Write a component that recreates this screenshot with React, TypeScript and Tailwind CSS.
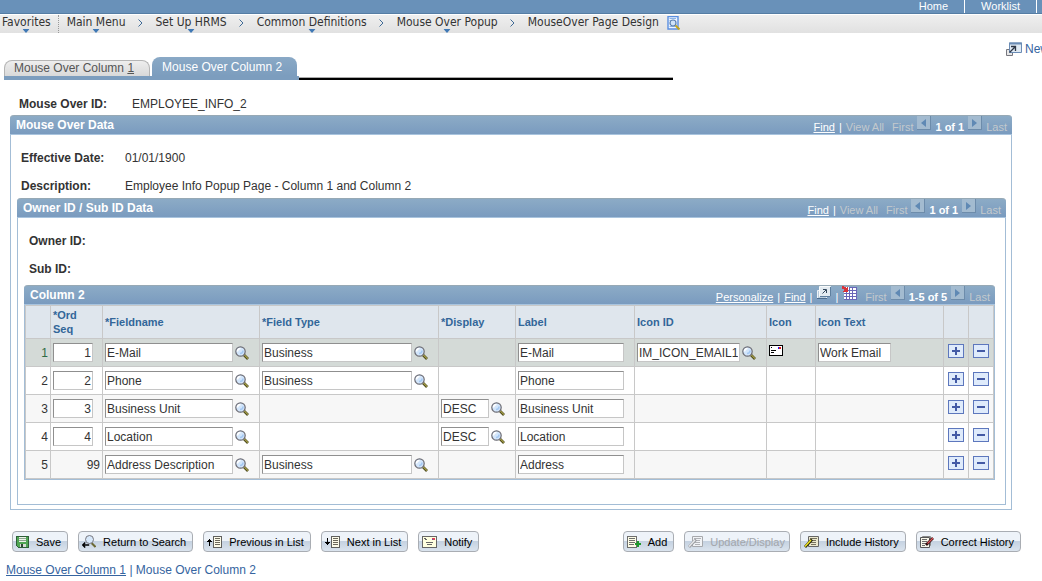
import type { ReactNode } from "react";
import clsx from "clsx";

type Row = {
  seq: string;
  seqEditable?: boolean;
  field: string;
  type?: string;
  display?: string;
  label: string;
  iconId?: string;
  iconText?: string;
};

const CRUMBS = ["Main Menu", "Set Up HRMS", "Common Definitions", "Mouse Over Popup"];

const ROWS: Row[] = [
  { seq: "1", seqEditable: true, field: "E-Mail", type: "Business", label: "E-Mail", iconId: "IM_ICON_EMAIL1", iconText: "Work Email" },
  { seq: "2", seqEditable: true, field: "Phone", type: "Business", label: "Phone" },
  { seq: "3", seqEditable: true, field: "Business Unit", display: "DESC", label: "Business Unit" },
  { seq: "4", seqEditable: true, field: "Location", display: "DESC", label: "Location" },
  { seq: "99", field: "Address Description", type: "Business", label: "Address" },
];

/* ---------- icons ---------- */

function Magnifier() {
  return (
    <svg width="14" height="14" viewBox="0 0 14 14">
      <path d="M9 9l4 4" stroke="#4c4a1c" strokeWidth="2.6" />
      <path d="M9 8.6l4 4" stroke="#b0a94e" strokeWidth="1.1" />
      <circle cx="5.5" cy="5.5" r="4.7" fill="#d3e6fb" stroke="#6c6c74" strokeWidth="1.2" />
      <path d="M2.5 5.5a3 3 0 0 1 3-3" stroke="#fff" strokeWidth="1.6" fill="none" />
      <path d="M5 7.5a3 3 0 0 0 3-3" stroke="#a5c9f3" strokeWidth="1.6" fill="none" />
    </svg>
  );
}

function PageSearchIcon() {
  return (
    <svg width="13" height="14" viewBox="0 0 13 14">
      <path d="M1 .5h10v12.500H1z" fill="#eef5ff" stroke="#5b8fe0" strokeWidth="1.400" />
      <path d="M2.500 2.500H9M2.500 4.500H4M2.500 10.500H8" stroke="#8db4e6" />
      <circle cx="6" cy="7" r="3" fill="#cfe3f8" stroke="#5a7fae" strokeWidth="1.200" />
      <path d="M8.500 9.500l4 4" stroke="#c0a31d" strokeWidth="2" />
    </svg>
  );
}

function NewWindowIcon() {
  return (
    <svg width="16" height="14" viewBox="0 0 16 14">
      <path d="M.5 7.500h6v6h-6z" fill="#e7e7e7" stroke="#77777f" />
      <path d="M3.500 1h12v9.500h-12z" fill="#dfe9f3" stroke="#6b8cb5" />
      <path d="M3 1.500h13" stroke="#6b8cb5" strokeWidth="2" />
      <path d="M3.500 10.500L9 5M5 4.500h4.500V9" fill="none" stroke="#2d3646" strokeWidth="1.300" />
    </svg>
  );
}

function PopoutIcon() {
  return (
    <svg width="15" height="13" viewBox="0 0 15 13">
      <path d="M1.500 4.500h9v8h-9z" fill="#b9cbdb" stroke="#eef3f7" />
      <path d="M1 12.500h10" stroke="#4c6c8d" />
      <path d="M3.500.5h11v10h-11z" fill="#e3ebf1" stroke="#f8fafb" />
      <path d="M14.500 1v9.500H4" fill="none" stroke="#5e7f9f" />
      <path d="M6.500 7.500L10 4M7 3.500h3.500V7" fill="none" stroke="#33475b" />
    </svg>
  );
}

function GridIcon() {
  return (
    <svg width="15" height="14" viewBox="0 0 15 14" shapeRendering="crispEdges">
      <path d="M2 1h12v13H2z" fill="#fff" />
      <path d="M2 4.500h13M2 7.500h13M2 10.500h13M2 13.500h13M4.500 2v12M7.500 1v13M10.500 1v13M14.500 1v13M7 1.500h8" stroke="#6a66b8" />
      <path d="M0 0h2v1h2v1h1V1h1v5H1V5h1V3H0z" fill="#d8333a" />
    </svg>
  );
}

function EnvelopeIcon() {
  return (
    <svg width="14" height="11" viewBox="0 0 14 11" shapeRendering="crispEdges">
      <path d="M.5.5h13v10H.5z" fill="#fff" stroke="#000" />
      <path d="M2 2.500h1M2 5.500h5M2 7.500h3" stroke="#000" />
      <path d="M9 2h1v2H9z" fill="#1b1bff" />
      <path d="M10 2h2v2h-2z" fill="#e01717" />
    </svg>
  );
}

function SaveIcon() {
  return (
    <svg width="13" height="12" viewBox="0 0 13 12" shapeRendering="crispEdges">
      <path d="M.5.500h12v11H2.500l-2-2z" fill="#4fa653" stroke="#2e5f38" />
      <path d="M3 1h7v5H3z" fill="#eef3ea" />
      <path d="M3 2.500h7M3 4.500h7" stroke="#8ba58e" />
      <path d="M4 8h6v3H4z" fill="#d6ddd6" />
      <path d="M5 8h2v3H5z" fill="#2f4635" />
    </svg>
  );
}

function ReturnIcon() {
  return (
    <svg width="14" height="13" viewBox="0 0 14 13">
      <path d="M9.500 8l4 4" stroke="#6d6a35" strokeWidth="2" />
      <circle cx="7.500" cy="4.500" r="4" fill="#d7e8fa" stroke="#77777f" />
      <path d="M.8 10h6.400M3.200 7.500L.8 10l2.400 2.500" fill="none" stroke="#000" strokeWidth="1.500" />
    </svg>
  );
}

function ListIcon({ down }: { down?: boolean }) {
  return (
    <svg width="15" height="12" viewBox="0 0 15 12" shapeRendering="crispEdges">
      {down ? (
        <path d="M2 2h1v4h2v1H4v1H3v1H2V8H1V7H0V6h2z" fill="#000" />
      ) : (
        <path d="M2 10h1V6h2V5H4V4H3V3H2v1H1v1H0v1h2z" fill="#000" />
      )}
      <path d="M6.500.500h8v11h-8z" fill="#fdfbe9" stroke="#60605e" />
      <path d="M8 2.500h5M8 4.500h5M8 6.500h5M8 8.500h5" stroke="#6b675a" />
    </svg>
  );
}

function NotifyIcon() {
  return (
    <svg width="15" height="12" viewBox="0 0 15 12" shapeRendering="crispEdges">
      <path d="M.5.500h14v11H.5z" fill="#ffffdf" stroke="#666" />
      <path d="M2 2.500h2M3 3.500h2M4 6.500h7M5 8.500h5" stroke="#666" />
      <path d="M10 2h3v2h-3z" fill="#e0415a" />
      <path d="M10 3h1v1h-1z" fill="#4457c9" />
    </svg>
  );
}

function AddIcon() {
  return (
    <svg width="14" height="12" viewBox="0 0 14 12" shapeRendering="crispEdges">
      <path d="M.5.500h9v11h-9z" fill="#fdfde6" stroke="#6e6e6e" />
      <path d="M2 2.500h6M2 4.500h6M2 6.500h6M2 8.500h5" stroke="#6e6e6e" />
      <path d="M10 5h2v2h2v2h-2v2h-2V9H8V7h2z" fill="#1f9a2d" />
    </svg>
  );
}

function PencilPageIcon({ muted }: { muted?: boolean }) {
  return (
    <svg width="15" height="12" viewBox="0 0 15 12">
      <path d="M4.500.500h10v10h-10z" fill={muted ? "#f1f3f6" : "#ece9cf"} stroke={muted ? "#a6a8ac" : "#666"} />
      <path d="M6 2.500h7M7 4.500h5M7 6.500h5M7 8.500h5" stroke={muted ? "#b0b2b6" : "#77735f"} />
      <path d="M1 11l7-7.500" stroke={muted ? "#9b9da1" : "#26260c"} strokeWidth="2.800" />
      <path d="M1 10.500l6-6.500" stroke={muted ? "#e6e8eb" : "#efe31f"} strokeWidth="1.500" />
    </svg>
  );
}

function CorrectIcon() {
  return (
    <svg width="14" height="12" viewBox="0 0 14 12">
      <path d="M2.500.500h8v9h-8z" fill="#fff" stroke="#888" />
      <path d="M.5 1.500h9v10h-9z" fill="#f7f6e9" stroke="#555" />
      <path d="M2 3.500h5M2 5.500h5M2 7.500h4M2 9.500h3" stroke="#6b6b6b" />
      <path d="M6 9l7-7" stroke="#2c0d0d" strokeWidth="2.600" />
      <path d="M7.500 7.500L13 2" stroke="#e0565c" strokeWidth="1.300" />
    </svg>
  );
}

/* ---------- building blocks ---------- */

function Crumb({ children }: { children: ReactNode }) {
  return (
    <a href="#menu" className="relative block h-full">
      {children}
      <svg className="absolute top-3.5 left-1/2 -translate-x-1/2" width="7" height="4" viewBox="0 0 7 4">
        <path d="M0 0h7L3.500 4z" fill="#3f78b5" />
      </svg>
    </a>
  );
}

function Arrow({ dir }: { dir: "left" | "right" }) {
  return (
    <button
      aria-label={dir === "left" ? "Previous" : "Next"}
      className="flex h-3.5 w-3.5 items-center justify-center self-start border-r border-b border-[#6d8cab] bg-[#a3bbd0]"
    >
      <svg width="5" height="8" viewBox="0 0 5 8">
        <path d={dir === "left" ? "M5 0v8L0 4z" : "M0 0v8l5-4z"} fill="#5f89b4" />
      </svg>
    </button>
  );
}

function Pager({ range }: { range: string }) {
  return (
    <>
      <span className="pl-1 text-[#c3c9cd]">First</span>
      <Arrow dir="left" />
      <span className="font-bold">{range}</span>
      <Arrow dir="right" />
      <span className="text-[#c3c9cd]">Last</span>
    </>
  );
}

function Panel({ title, tools, className, children }: { title: string; tools: ReactNode; className?: string; children: ReactNode }) {
  return (
    <section className={clsx("rounded-t border border-t-0 border-[#a3bdd6]", className)}>
      <header className="-mx-px flex h-5 items-center rounded-t border-t border-b border-t-[#97a9b5] border-b-[#a9c4de] bg-linear-to-b from-[#8cabc6] to-[#7a9bbf] pr-[5px] pl-1.5 text-white">
        <h2 className="font-bold">{title}</h2>
        <div className="ml-auto flex h-full items-end gap-1 text-[11px] leading-[14px]">{tools}</div>
      </header>
      {children}
    </section>
  );
}

function SectionTools() {
  return (
    <>
      <a href="#find" className="underline">Find</a>
      <span>|</span>
      <span className="text-[#c3c9cd]">View All</span>
      <Pager range="1 of 1" />
    </>
  );
}

function Info({ label, value }: { label: string; value?: string }) {
  return (
    <div className="flex h-5 items-center">
      <dt className="w-[104px] font-bold">{label}</dt>
      <dd>{value}</dd>
    </div>
  );
}

function Field({ name, value, className, lookup }: { name: string; value?: string; className: string; lookup?: boolean }) {
  if (!value) return null;
  return (
    <div className="flex items-center gap-0.5">
      <input
        aria-label={name}
        defaultValue={value}
        className={clsx("h-[19px] border border-t-[#8f8f8f] border-r-[#c6c6c6] border-b-[#c6c6c6] border-l-[#8f8f8f] bg-white px-px", className)}
      />
      {lookup && (
        <button aria-label={`Look up ${name}`}>
          <Magnifier />
        </button>
      )}
    </div>
  );
}

function SquareButton({ label, children }: { label: string; children: ReactNode }) {
  return (
    <button aria-label={label} className="mx-auto mb-1 flex h-3.5 w-4 items-center justify-center border border-[#5d77bd] bg-[#dfebfb]">
      {children}
    </button>
  );
}

function ToolButton({ icon, disabled, children }: { icon: ReactNode; disabled?: boolean; children: ReactNode }) {
  return (
    <button
      disabled={disabled}
      className={clsx(
        "flex h-[21px] items-center gap-[7px] rounded border border-[#a9adb3] bg-linear-to-b from-[#eef3f9] from-45% via-[#c5d2e1] via-50% to-[#dbe4ee] pl-[3px] text-[11px] whitespace-nowrap",
        disabled ? "pr-1 text-[#a3a6ab]" : "pr-1.5 text-black",
      )}
    >
      {icon}
      {children}
    </button>
  );
}

const cell = "border border-[#c8c8c8] px-0.5";

export default function App() {
  return (
    <div className="overflow-x-hidden bg-white font-['Liberation_Sans',Arial,sans-serif] text-[12px] leading-4 text-[#333]">
      <div className="flex h-3.5 items-start justify-end border-b border-[#557da4] bg-[#6991b9] pr-[5px] leading-[13px] text-white">
        <a href="#home" className="border-r px-4 text-[11px]">Home</a>
        <a href="#worklist" className="border-r px-4 text-[11px]">Worklist</a>
      </div>

      <nav className="mt-px flex h-[18px] items-start bg-linear-to-b from-[#efefef] to-[#e1e1e1] pl-0.5 font-['DejaVu_Sans_Condensed','Noto_Sans',sans-serif] leading-[14px] whitespace-nowrap">
        <Crumb>Favorites</Crumb>
        <span className="mr-2 ml-[7px] h-full border-l border-dotted border-[#999]" />
        {CRUMBS.map((c) => (
          <span key={c} className="flex">
            <Crumb>{c}</Crumb>
            <svg className="mr-[13px] ml-3 mt-1" width="5" height="8" viewBox="0 0 5 8">
              <path d="M.5.5L4 4 .5 7.500" fill="none" stroke="#3f6a96" />
            </svg>
          </span>
        ))}
        <a href="#design">MouseOver Page Design</a>
        <button aria-label="Search pages" className="ml-2 pt-px">
          <PageSearchIcon />
        </button>
      </nav>

      <div className="flex h-6 items-end justify-end">
        <a href="#new" className="flex w-9 items-center gap-[3px] whitespace-nowrap text-[#3564a0]">
          <span className="shrink-0">
            <NewWindowIcon />
          </span>
          New Window
        </a>
      </div>

      <div className="flex items-end pl-1">
        <div className="flex items-end gap-0.5 border-b-4 border-[#7c9dbe] pr-0.5">
          <a href="#col1" className="h-4 rounded-t-lg border border-b-0 border-[#b5b5b5] bg-linear-to-b from-[#eee] to-[#d9d9d9] pr-[15px] pl-[9px] leading-[15px] text-[#555]">
            Mouse Over Column <u>1</u>
          </a>
          <a href="#col2" className="h-[19px] rounded-t-lg bg-linear-to-b from-[#8aa9c6] to-[#7c9dbe] pr-[15px] pl-[10px] leading-5 text-white">
            Mouse Over Column 2
          </a>
        </div>
        <div className="w-[374px] border-t border-b-2 border-t-[#aaa] border-b-black" />
      </div>

      <main className="pr-[30px] pl-2.5">
        <div className="flex h-[35px] items-center pt-3 pl-[9px]">
          <span className="w-[113px] font-bold">Mouse Over ID:</span>
          <span>EMPLOYEE_INFO_2</span>
        </div>

        <Panel title="Mouse Over Data" tools={<SectionTools />}>
          <dl className="mt-[13px] mb-0.5 space-y-2 pl-2.5">
            <Info label="Effective Date:" value="01/01/1900" />
            <Info label="Description:" value="Employee Info Popup Page - Column 1 and Column 2" />
          </dl>
          <Panel title="Owner ID / Sub ID Data" tools={<SectionTools />} className="mr-[5px] mb-1 ml-1.5">
            <dl className="mt-[13px] mb-1.5 space-y-2 pl-[11px]">
              <Info label="Owner ID:" />
              <Info label="Sub ID:" />
            </dl>
            <Panel
              title="Column 2"
              className="mr-2.5 mb-6 ml-1.5"
              tools={
                <>
                  <a href="#personalize" className="underline">Personalize</a>
                  <span>|</span>
                  <a href="#find-row" className="underline">Find</a>
                  <span>|</span>
                  <button aria-label="Zoom grid" className="self-start"><PopoutIcon /></button>
                  <span>|</span>
                  <button aria-label="Download" className="self-start"><GridIcon /></button>
                  <Pager range="1-5 of 5" />
                </>
              }
            >
              <table className="w-full table-fixed border-collapse">
                <colgroup>
                  <col className="w-[25px]" />
                  <col className="w-[52px]" />
                  <col className="w-[157px]" />
                  <col className="w-[179px]" />
                  <col className="w-[77px]" />
                  <col className="w-[119px]" />
                  <col className="w-[132px]" />
                  <col className="w-[49px]" />
                  <col />
                  <col className="w-[25px]" />
                  <col className="w-[25px]" />
                </colgroup>
                <thead>
                  <tr className="h-[33px] bg-[#dfe6ed] text-left text-[11px] leading-[14px] text-[#336699]">
                    {["", "*Ord Seq", "*Fieldname", "*Field Type", "*Display", "Label", "Icon ID", "Icon", "Icon Text", "", ""].map((h, i) => (
                      <th key={i} className={cell}>{h}</th>
                    ))}
                  </tr>
                </thead>
                <tbody>
                  {ROWS.map((r, i) => (
                    <tr key={r.seq} className={clsx("h-7", i === 0 ? "bg-[#d4dad7]" : i % 2 ? "bg-white" : "bg-[#f7f7f7]")}>
                      <td className={clsx(cell, "text-right", i === 0 && "text-[#2f6b45]")}>{i + 1}</td>
                      <td className={clsx(cell, !r.seqEditable && "text-right")}>
                        {r.seqEditable ? <Field name="Ord Seq" value={r.seq} className="w-10 text-right" /> : r.seq}
                      </td>
                      <td className={cell}><Field name="Fieldname" value={r.field} className="w-32" lookup /></td>
                      <td className={cell}><Field name="Field Type" value={r.type} className="w-[150px]" lookup /></td>
                      <td className={cell}><Field name="Display" value={r.display} className="w-12" lookup /></td>
                      <td className={cell}><Field name="Label" value={r.label} className="w-[106px]" /></td>
                      <td className={cell}><Field name="Icon ID" value={r.iconId} className="w-[103px]" lookup /></td>
                      <td className={cell}>{r.iconId && <div className="mb-1"><EnvelopeIcon /></div>}</td>
                      <td className={cell}><Field name="Icon Text" value={r.iconText} className="w-[73px]" /></td>
                      <td className={cell}>
                        <SquareButton label="Add row">
                          <svg width="8" height="8" viewBox="0 0 8 8"><path d="M4 0v8M0 4h8" stroke="#435aa5" strokeWidth="2" /></svg>
                        </SquareButton>
                      </td>
                      <td className={cell}>
                        <SquareButton label="Delete row">
                          <svg width="8" height="8" viewBox="0 0 8 8"><path d="M0 4h8" stroke="#435aa5" strokeWidth="2" /></svg>
                        </SquareButton>
                      </td>
                    </tr>
                  ))}
                </tbody>
              </table>
            </Panel>
          </Panel>
        </Panel>
      </main>

      <footer className="pt-[21px] text-[#3564a0]">
        <div className="flex gap-2.5 pr-[21px] pl-3">
          <ToolButton icon={<SaveIcon />}>Save</ToolButton>
          <ToolButton icon={<ReturnIcon />}>Return to Search</ToolButton>
          <ToolButton icon={<ListIcon />}>Previous in List</ToolButton>
          <ToolButton icon={<ListIcon down />}>Next in List</ToolButton>
          <ToolButton icon={<NotifyIcon />}>Notify</ToolButton>
          <span className="flex-1" />
          <ToolButton icon={<AddIcon />}>Add</ToolButton>
          <ToolButton icon={<PencilPageIcon muted />} disabled>Update/Display</ToolButton>
          <ToolButton icon={<PencilPageIcon />}>Include History</ToolButton>
          <ToolButton icon={<CorrectIcon />}>Correct History</ToolButton>
        </div>
        <p className="mt-2.5 pl-1.5">
          <a href="#col1" className="underline">Mouse Over Column 1</a> | Mouse Over Column 2
        </p>
      </footer>
    </div>
  );
}
